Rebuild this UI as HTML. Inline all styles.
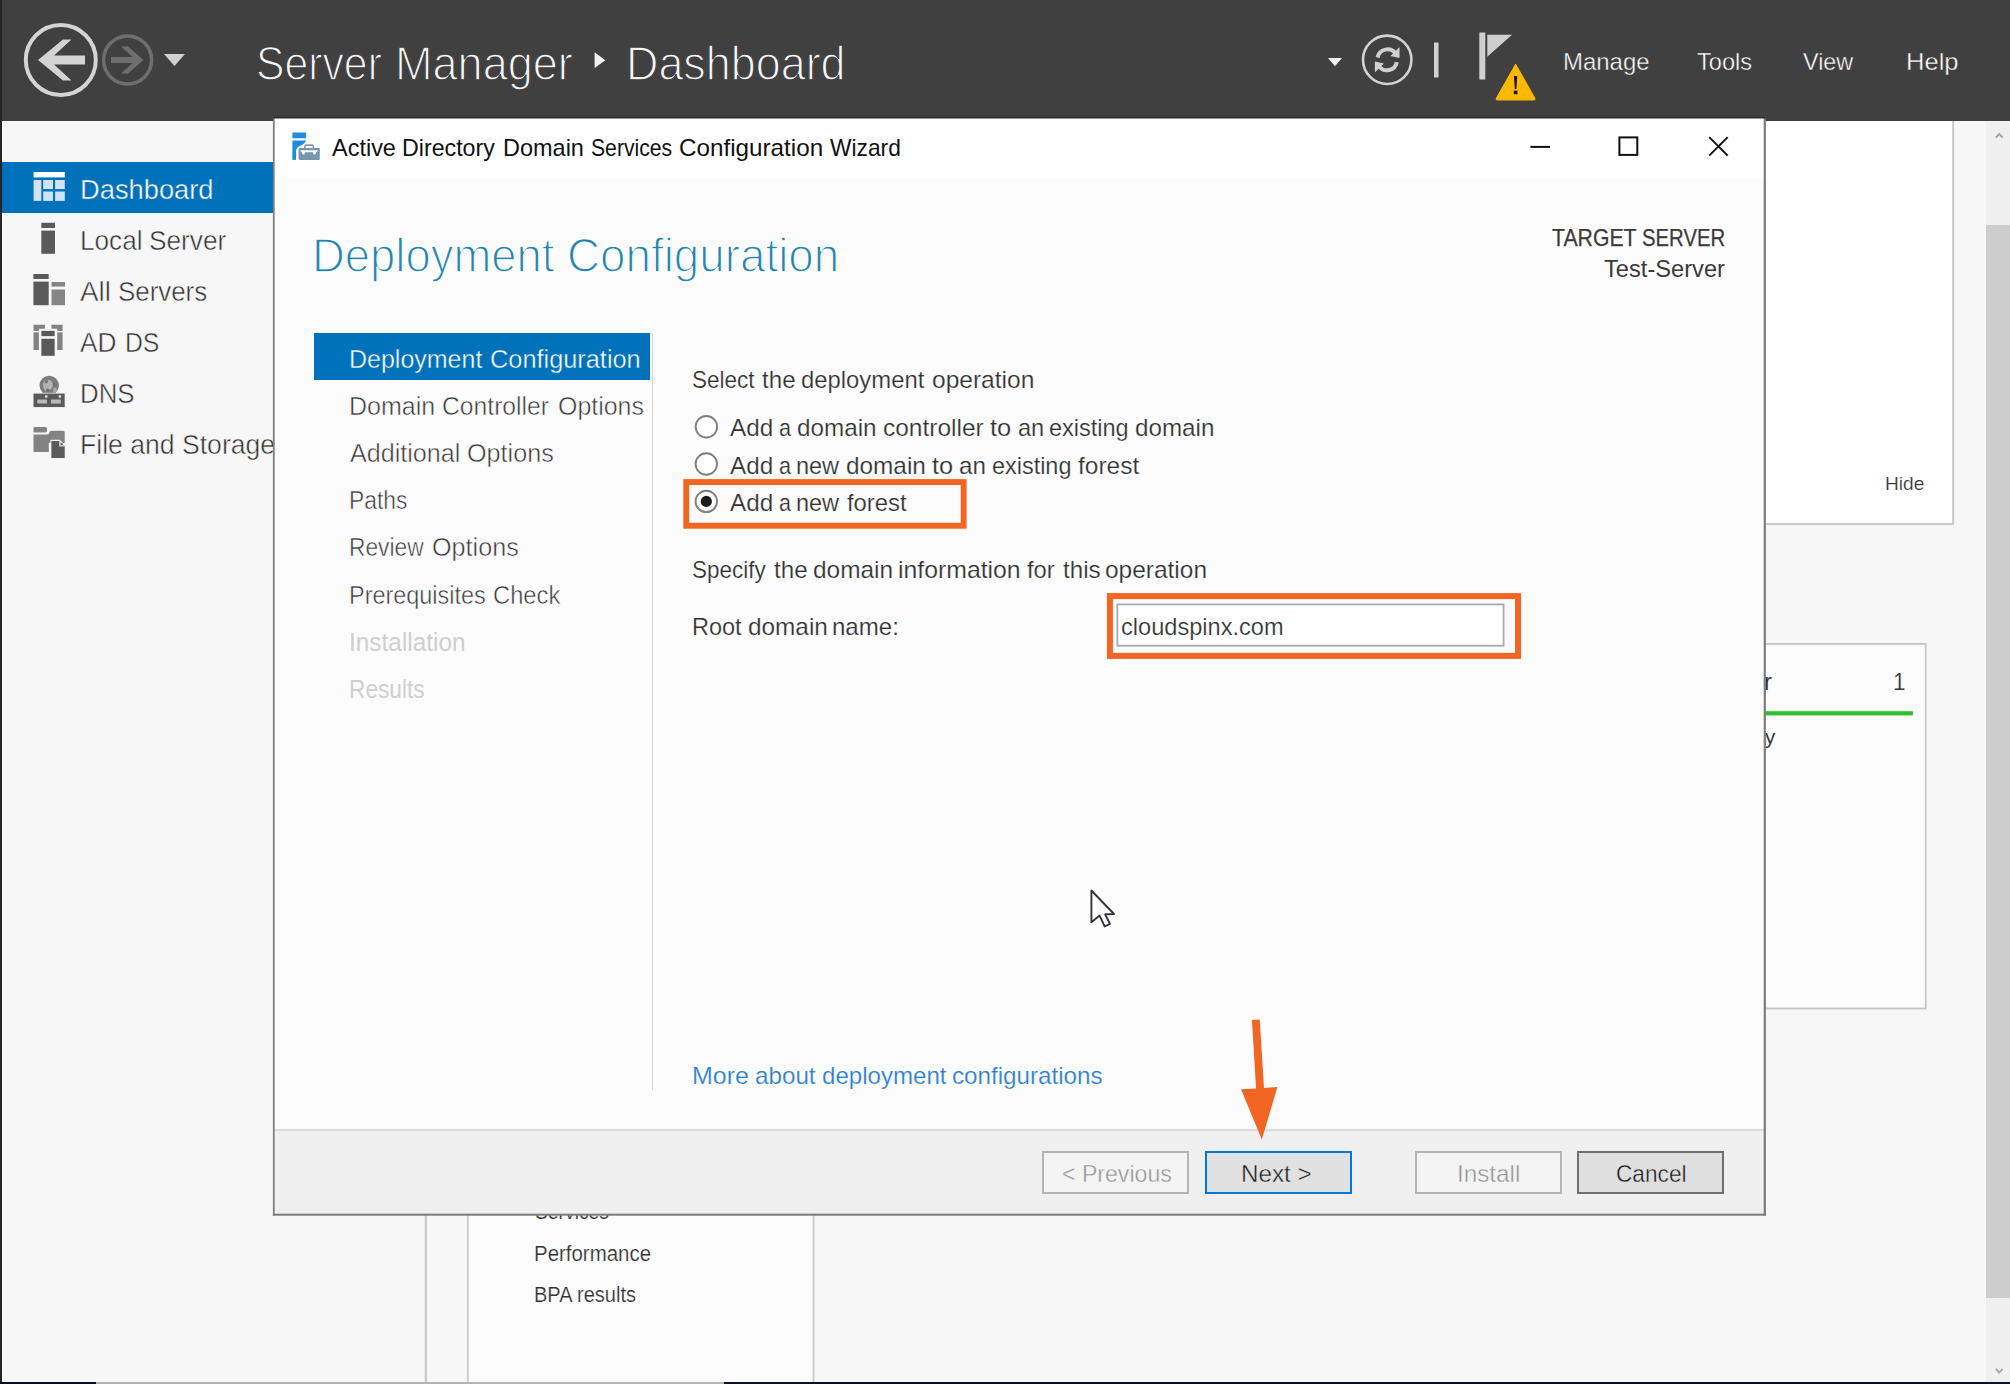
<!DOCTYPE html>
<html lang="en"><head><meta charset="utf-8"><title>Server Manager - Active Directory Domain Services Configuration Wizard</title>
<style>
*{box-sizing:border-box;margin:0;padding:0}
html,body{width:2010px;height:1384px;overflow:hidden;background:#f7f7f7;font-family:'Liberation Sans',sans-serif}
.abs,.t,svg{position:absolute}
.line{display:contents}
ul,ol{list-style:none}
h1,h2,h3{font-size:inherit;font-weight:inherit}
button{font:inherit;color:inherit;appearance:none;-webkit-appearance:none;cursor:default;overflow:visible;text-align:left}
fieldset{border:0;min-width:0}
.t{white-space:nowrap;transform-origin:0 0;display:block}
#app{position:absolute;left:0;top:0;width:2010px;height:1384px;overflow:hidden;background:#f7f7f7}
#edgeL{left:0;top:0;width:2px;height:1384px;background:#252525}
#header{left:2px;top:0;width:2008px;height:121px;background:#404040}
#sidebar{left:2px;top:120px;width:272px;height:1262px;overflow:hidden}
#sel{left:0;top:42px;width:272px;height:51px;background:#0072bb}
#wizard{left:274px;top:118px;width:1490.5px;height:1096.5px;background:#fcfcfc}
#wtitle{left:274.8px;top:118.6px;width:1489.1px;height:59px;background:#fff}
#wfoot{left:274.8px;top:1129.3px;width:1489.1px;height:84.5px;background:#f0f0f0;border-top:2px solid #dcdcdc}
.btn{top:1151.1px;height:43px;width:147.3px;border:2px solid #b2b6b9;background:#f4f4f4}
</style></head><body>
<div id="app">

<!-- ===== background dashboard content ===== -->
<main id="dashboard" aria-label="Dashboard">
<div class="abs" style="left:468px;top:1200px;width:345px;height:190px;background:#fcfcfc"></div>
<svg style="left:420px;top:1200px" width="400" height="184" viewBox="420 1200 400 184">
 <rect x="424.6" y="1200" width="2.5" height="184" fill="#cdcdcd"/>
 <rect x="467" y="1200" width="1.8" height="184" fill="#cbcbcb"/>
 <rect x="812.6" y="1200" width="1.8" height="184" fill="#cbcbcb"/>
</svg>
<span class="t" style="left:534.9px;top:1202px;font-size:21.5px;line-height:21.5px;color:#333333;font-weight:400;transform:scaleX(0.8975);-webkit-text-stroke:0.2px #fcfcfc;">Services</span>
<span class="t" style="left:533.9px;top:1244px;font-size:21.5px;line-height:21.5px;color:#333333;font-weight:400;transform:scaleX(0.9508);-webkit-text-stroke:0.2px #fcfcfc;">Performance</span>
<span class="t" style="left:533.94px;top:1285px;font-size:21.5px;line-height:21.5px;color:#333333;font-weight:400;transform:scaleX(0.9308);-webkit-text-stroke:0.2px #fcfcfc;">BPA results</span>
<svg style="left:1756px;top:118px" width="204" height="412" viewBox="1756 118 204 412"><rect x="1758" y="119" width="195.1" height="405" fill="#fff" stroke="#cbcbcb" stroke-width="2"/></svg>
<span class="t" style="left:1884.59px;top:474px;font-size:19px;line-height:19px;color:#333333;font-weight:400;transform:scaleX(1.0056);-webkit-text-stroke:0.2px #ffffff;">Hide</span>
<svg style="left:1756px;top:640px" width="176" height="374" viewBox="1756 640 176 374"><rect x="1758" y="643.9" width="167.7" height="364.6" fill="#fcfcfc" stroke="#c5c5c5" stroke-width="1.8"/></svg>
<span class="t" style="left:1764px;top:671px;font-size:23.5px;line-height:23.5px;color:#333">r</span>
<span class="t" style="left:1893.08px;top:671px;font-size:23.5px;line-height:23.5px;color:#333333;font-weight:400;transform:scaleX(0.96);-webkit-text-stroke:0.2px #fcfcfc;">1</span>
<svg style="left:1756px;top:706px" width="162" height="14" viewBox="1756 706 162 14"><rect x="1758" y="711.2" width="154.9" height="4.2" fill="#2fc032"/></svg>
<span class="t" style="left:1765px;top:727px;font-size:20.5px;line-height:20.5px;color:#333">y</span>
<!-- scrollbar -->
<div class="abs" style="left:1985.5px;top:120px;width:24.5px;height:1262px;background:#f0f0f0"></div>
<div class="abs" style="left:1985.5px;top:225px;width:24.5px;height:1073px;background:#cdcdcd"></div>
<svg style="left:1990px;top:128px" width="18" height="14" viewBox="1990 128 18 14"><path d="M1995.8 137.6 L1999.3 134 L2002.8 137.6" fill="none" stroke="#a6a6a6" stroke-width="2"/></svg>
<svg style="left:1990px;top:1362px" width="18" height="16" viewBox="1990 1362 18 16"><path d="M1995.8 1368.8 L1999.2 1372.6 L2002.6 1368.8" fill="none" stroke="#aaaaaa" stroke-width="2"/></svg>
</main>

<!-- ===== header ===== -->
<header id="topbar">
<div id="header" class="abs"></div>
<svg style="left:0;top:0" width="260" height="120" viewBox="0 0 260 120">
 <circle cx="60.8" cy="60" r="35" fill="none" stroke="#d4d4d4" stroke-width="4"/>
 <path d="M38 60 L63 39.5 L71.5 39.5 L54 55.5 L85 55.5 L85 64.5 L54 64.5 L71.5 80.5 L63 80.5 Z" fill="#d4d4d4"/>
 <circle cx="127.6" cy="60" r="24" fill="none" stroke="#6e6e6e" stroke-width="3.5"/>
 <path d="M143.5 60 L128 46.5 L121 46.5 L132.5 57 L111 57 L111 63 L132.5 63 L121 73.5 L128 73.5 Z" fill="#6e6e6e"/>
 <path d="M164 54 L185 54 L174.5 66 Z" fill="#d0d0d0"/>
</svg>
<h1 class="line"><span class="line"><span class="t" style="left:255.88px;top:39px;font-size:49px;line-height:49px;color:#ececec;font-weight:400;transform:scaleX(0.8721);-webkit-text-stroke:1.4px #404040;color:#f6f6f6;">Server </span><span class="t" style="left:395.12px;top:39px;font-size:49px;line-height:49px;color:#ececec;font-weight:400;transform:scaleX(0.9197);-webkit-text-stroke:1.4px #404040;color:#f6f6f6;">Manager</span></span>
<svg style="left:594px;top:50px" width="16" height="22" viewBox="0 0 16 22"><path d="M0.6 2.2 L11.4 10.3 L0.6 18 Z" fill="#f2f2f2"/></svg>
<span class="t" style="left:625.64px;top:39px;font-size:49px;line-height:49px;color:#ececec;font-weight:400;transform:scaleX(0.9159);-webkit-text-stroke:1.4px #404040;color:#f6f6f6;">Dashboard</span></h1>
<svg style="left:1320px;top:20px" width="230" height="95" viewBox="1320 20 230 95">
 <path d="M1328 58 L1342 58 L1335 66.3 Z" fill="#f2f2f2"/>
 <circle cx="1387.2" cy="59.8" r="24.2" fill="none" stroke="#d2d2d2" stroke-width="2.6"/>
 <path d="M1377.6 57.5 A10 10 0 0 1 1395.5 53.5" fill="none" stroke="#d0d0d0" stroke-width="4"/>
 <path d="M1390.5 56 L1399.5 47 L1399.5 58 Z" fill="#d0d0d0"/>
 <path d="M1396.8 62.1 A10 10 0 0 1 1378.9 66.1" fill="none" stroke="#d0d0d0" stroke-width="4"/>
 <path d="M1383.9 63.6 L1374.9 72.6 L1374.9 61.6 Z" fill="#d0d0d0"/>
 <rect x="1434" y="42.5" width="4.5" height="35" fill="#d0d0d0"/>
 <rect x="1479.3" y="32.5" width="6" height="47" fill="#cfcfcf"/>
 <path d="M1487.3 34.8 L1512 34.8 L1487.3 56.7 Z" fill="#cfcfcf"/>
 <path d="M1515.6 64.5 L1534.6 98 Q1535.4 99.8 1533.4 99.8 L1497.8 99.8 Q1495.8 99.8 1496.6 98 Z" fill="#ffb900" stroke="#ffb900" stroke-width="1.2" stroke-linejoin="round"/>
 <path d="M1514 76 L1517.2 76 L1516.4 89 L1514.8 89 Z" fill="#111"/>
 <rect x="1513.8" y="90.6" width="3.6" height="3.6" fill="#111"/>
</svg>
<ul class="menu"><li><span class="t" style="left:1562.5px;top:50px;font-size:24px;line-height:24px;color:#ffffff;font-weight:400;transform:scaleX(0.9976);-webkit-text-stroke:0.4px #404040;">Manage</span></li><li><span class="t" style="left:1697.02px;top:50px;font-size:24px;line-height:24px;color:#ffffff;font-weight:400;transform:scaleX(0.9815);-webkit-text-stroke:0.4px #404040;">Tools</span></li><li><span class="t" style="left:1803.0px;top:50px;font-size:24px;line-height:24px;color:#ffffff;font-weight:400;transform:scaleX(0.9712);-webkit-text-stroke:0.4px #404040;">View</span></li><li><span class="t" style="left:1905.87px;top:50px;font-size:24px;line-height:24px;color:#ffffff;font-weight:400;transform:scaleX(1.0652);-webkit-text-stroke:0.4px #404040;">Help</span></li></ul>
</header>

<!-- ===== sidebar ===== -->
<nav id="sidenav" aria-label="Server Manager navigation">
<div id="sidebar" class="abs"><div id="sel" class="abs"></div></div>
<svg style="left:0;top:160px" width="80" height="310" viewBox="0 160 80 310">
 <!-- dashboard -->
 <rect x="33.6" y="172" width="31.2" height="5.4" fill="#fff"/>
 <g fill="#cfe3f3"><rect x="33.6" y="180" width="7.7" height="20.9"/><rect x="43.2" y="180" width="9.8" height="9.1"/><rect x="55.1" y="180" width="9.7" height="9.1"/>
 <rect x="43.2" y="191.5" width="9.8" height="9.4"/><rect x="55.1" y="191.5" width="9.7" height="9.4"/></g>
 <!-- local server -->
 <rect x="41.3" y="222.8" width="13.7" height="5.2" fill="#5a5a5a"/><rect x="41.3" y="230.6" width="13.7" height="23.2" fill="#5a5a5a"/>
 <!-- all servers -->
 <rect x="33.4" y="274" width="15.3" height="5" fill="#5a5a5a"/><rect x="33.4" y="281.6" width="15.3" height="23.6" fill="#5a5a5a"/>
 <rect x="51.5" y="282" width="13.5" height="4.6" fill="#858585"/><rect x="51.5" y="289.5" width="13.5" height="15.7" fill="#858585"/>
 <!-- AD DS -->
 <g fill="#838383"><path d="M33.5 324.8 H44.9 V328.7 H38.9 V330.9 H33.5 Z"/><path d="M51.4 324.8 H62.6 V330.9 H57.2 V328.7 H51.4 Z"/><rect x="33.5" y="332.3" width="5.4" height="17.7"/><rect x="57.2" y="332.3" width="5.4" height="17.7"/></g>
 <g fill="#5a5a5a" stroke="#ececec" stroke-width="1.3" paint-order="stroke"><rect x="41.4" y="330.9" width="13.2" height="5.2"/><rect x="41.4" y="338.8" width="13.2" height="17"/></g>
 <!-- DNS -->
 <circle cx="49.2" cy="385.4" r="9.7" fill="#7c7c7c"/>
 <path d="M43 383.5 Q45.5 379 50 380 Q54 382.5 52.5 386.5 Q51 390.5 47.5 389.5 Q45.5 392 44 389 Q42.3 386 43 383.5 Z" fill="#b3b3b3"/>
 <path d="M53.5 388 Q56.5 386.5 57 390 Q55.5 393 53 392.5 Z" fill="#a8a8a8"/>
 <path d="M45 381.5 Q46.5 379.5 48.5 380.8 Q47.5 383.5 45.5 383.5 Z M53 383 Q55 382 55.5 384.5 Q54.5 386.5 53 385.5 Z M46.5 388.5 Q48.5 388 49.5 390 Q48 392 46.5 391 Z" fill="#6e6e6e"/>
 <rect x="33.5" y="393.55" width="31.2" height="13.55" fill="#5a5a5a" stroke="#fafafa" stroke-width="1.4" paint-order="stroke"/>
 <rect x="37.3" y="399.5" width="9.7" height="4" fill="#b8b8b8"/><rect x="51" y="399.5" width="9.8" height="4" fill="#b8b8b8"/>
 <rect x="45" y="395.3" width="2.4" height="2.3" fill="#e6e6e6"/><rect x="58.7" y="395.3" width="2.4" height="2.3" fill="#e6e6e6"/>
 <!-- File and storage -->
 <path d="M34.6 426.9 H45.4 Q47 426.9 47 428.6 V430.8 Q47 432.45 45.4 432.45 H33.5 V428 Q33.5 426.9 34.6 426.9 Z" fill="#838383"/>
 <path d="M33.5 434.6 H46.5 Q49 434.6 49.4 432.4 Q49.8 430.8 51.6 430.8 H63 Q64.7 430.8 64.7 432.5 V443 H48.8 V452.1 H33.5 Z" fill="#838383"/>
 <path d="M51.4 440.9 H59.2 L64.7 446.4 V458.1 H51.4 Z" fill="#5a5a5a" stroke="#f2f2f2" stroke-width="2.2" paint-order="stroke" stroke-linejoin="round"/>
 <path d="M59.2 441 V446.4 H64.6 Z" fill="#dedede"/>
 <rect x="60.6" y="443.2" width="2" height="2" fill="#5a5a5a"/>
</svg>
<ul><li class="selected"><span class="t" style="left:80.02px;top:176px;font-size:27.5px;line-height:27.5px;color:#ffffff;font-weight:400;transform:scaleX(0.9924);-webkit-text-stroke:0.4px #0072bb;">Dashboard</span></li><li><span class="line"><span class="t" style="left:80.1px;top:227px;font-size:27.5px;line-height:27.5px;color:#333333;font-weight:400;transform:scaleX(0.9516);-webkit-text-stroke:0.5px #f7f7f7;">Local </span><span class="t" style="left:148.79px;top:227px;font-size:27.5px;line-height:27.5px;color:#333333;font-weight:400;transform:scaleX(0.9544);-webkit-text-stroke:0.5px #f7f7f7;">Server</span></span></li><li><span class="line"><span class="t" style="left:80.4px;top:278px;font-size:27.5px;line-height:27.5px;color:#333333;font-weight:400;transform:scaleX(1.0103);-webkit-text-stroke:0.5px #f7f7f7;">All </span><span class="t" style="left:117.52px;top:278px;font-size:27.5px;line-height:27.5px;color:#333333;font-weight:400;transform:scaleX(0.9413);-webkit-text-stroke:0.5px #f7f7f7;">Servers</span></span></li><li><span class="line"><span class="t" style="left:80.4px;top:329px;font-size:27.5px;line-height:27.5px;color:#333333;font-weight:400;transform:scaleX(0.9541);-webkit-text-stroke:0.5px #f7f7f7;">AD </span><span class="t" style="left:124.85px;top:329px;font-size:27.5px;line-height:27.5px;color:#333333;font-weight:400;transform:scaleX(0.9);-webkit-text-stroke:0.5px #f7f7f7;">DS</span></span></li><li><span class="t" style="left:80.12px;top:380px;font-size:27.5px;line-height:27.5px;color:#333333;font-weight:400;transform:scaleX(0.9382);-webkit-text-stroke:0.5px #f7f7f7;">DNS</span></li>
<li><div class="abs" style="left:0;top:420px;width:274px;height:50px;overflow:hidden"><span class="t" style="left:80.07px;top:431px;font-size:27.5px;line-height:27.5px;color:#333333;font-weight:400;transform:scaleX(0.967);-webkit-text-stroke:0.5px #f7f7f7;margin-top:-420px;">File and Storage Services</span></div></li></ul>
</nav>

<!-- ===== wizard window ===== -->
<section id="wiz" role="dialog" aria-label="Active Directory Domain Services Configuration Wizard">
<div id="wizard" class="abs"></div>
<div id="wtitle" class="abs"></div>
<div id="wfoot" class="abs"></div>
<svg style="left:270px;top:114px" width="1500" height="1106" viewBox="270 114 1500 1106">
 <rect x="272.9" y="116.8" width="1.8" height="1098.9" fill="#808080"/>
 <rect x="1763.7" y="116.8" width="2.2" height="1098.9" fill="#7c7c7c"/>
 <rect x="272.9" y="1213.7" width="1493" height="2" fill="#7c7c7c"/>
 <rect x="272.9" y="116.7" width="1493" height="1.8" fill="#2e2e2e"/>
</svg>
<svg style="left:288px;top:128px" width="36" height="36" viewBox="288 128 36 36">
 <rect x="292.4" y="132.5" width="13.7" height="5.8" rx="0.8" fill="#1f8ddb"/>
 <path d="M293.2 140.6 H305.4 Q306.4 140.6 305.8 141.6 Q303.5 145 300 146 Q296.2 147.3 296.1 151 V159.3 Q296.1 160.1 295.3 160.1 H293.2 Q292.4 160.1 292.4 159.3 V141.4 Q292.4 140.6 293.2 140.6 Z" fill="#1f8ddb"/>
 <rect x="298.6" y="148.1" width="21.2" height="12" rx="0.8" fill="#7896ab"/>
 <path d="M304.9 148.3 V146.6 Q304.9 145.2 306.3 145.2 H312 Q313.4 145.2 313.4 146.6 V148.3" fill="none" stroke="#7f9cb0" stroke-width="1.7"/>
 <path d="M300.2 150.2 H318 L316.6 152.2 H316.2 L315.3 154.4 H313.6 L313 152.2 H305 L304.4 154.4 H302.7 L301.8 152.2 H301.4 Z" fill="#fdfdfd"/>
</svg>
<h2 class="line"><span class="line"><span class="t" style="left:332.2px;top:136px;font-size:24px;line-height:24px;color:#111111;font-weight:400;transform:scaleX(0.9781);">Active </span><span class="t" style="left:402.47px;top:136px;font-size:24px;line-height:24px;color:#111111;font-weight:400;transform:scaleX(0.967);">Directory </span><span class="t" style="left:502.54px;top:136px;font-size:24px;line-height:24px;color:#111111;font-weight:400;transform:scaleX(0.9785);">Domain </span><span class="t" style="left:591.02px;top:136px;font-size:24px;line-height:24px;color:#111111;font-weight:400;transform:scaleX(0.8822);">Services </span><span class="t" style="left:679.49px;top:136px;font-size:24px;line-height:24px;color:#111111;font-weight:400;transform:scaleX(1.01);">Configuration </span><span class="t" style="left:830.0px;top:136px;font-size:24px;line-height:24px;color:#111111;font-weight:400;transform:scaleX(0.9479);">Wizard</span></span></h2>
<svg style="left:1520px;top:130px" width="220" height="34" viewBox="1520 130 220 34">
 <rect x="1530.4" y="145.9" width="19.6" height="2" fill="#111"/>
 <rect x="1619.4" y="137.4" width="17.9" height="17.5" fill="none" stroke="#111" stroke-width="2"/>
 <path d="M1709.2 137.1 L1727.7 155.6 M1727.7 137.1 L1709.2 155.6" stroke="#111" stroke-width="2" fill="none"/>
</svg>
<h1 class="line"><span class="line"><span class="t" style="left:312.49px;top:231px;font-size:49px;line-height:49px;color:#3d93bd;font-weight:400;transform:scaleX(0.9272);-webkit-text-stroke:1.5px #fcfcfc;color:#2585b0;">Deployment </span><span class="t" style="left:566.5px;top:231px;font-size:49px;line-height:49px;color:#3d93bd;font-weight:400;transform:scaleX(0.934);-webkit-text-stroke:1.5px #fcfcfc;color:#2585b0;">Configuration</span></span></h1>
<div class="line"><span class="line"><span class="t" style="left:1552.11px;top:226px;font-size:24px;line-height:24px;color:#3a3a3a;font-weight:400;transform:scaleX(0.8851);-webkit-text-stroke:0.25px #3a3a3a;">TARGET </span><span class="t" style="left:1642.45px;top:226px;font-size:24px;line-height:24px;color:#3a3a3a;font-weight:400;transform:scaleX(0.8469);-webkit-text-stroke:0.25px #3a3a3a;">SERVER</span></span><span class="t" style="left:1604.01px;top:257px;font-size:24px;line-height:24px;color:#3a3a3a;font-weight:400;transform:scaleX(0.986);">Test-Server</span></div>
<div class="abs" style="left:314px;top:333px;width:335.5px;height:47px;background:#0072bb"></div>
<div class="abs" style="left:651.5px;top:333px;width:1.6px;height:757px;background:#d3d3d3"></div>
<ol class="steps"><li class="current"><span class="line"><span class="t" style="left:348.88px;top:346px;font-size:26px;line-height:26px;color:#ffffff;font-weight:400;transform:scaleX(0.9613);-webkit-text-stroke:0.4px #0072bb;">Deployment </span><span class="t" style="left:490.23px;top:346px;font-size:26px;line-height:26px;color:#ffffff;font-weight:400;transform:scaleX(0.9743);-webkit-text-stroke:0.4px #0072bb;">Configuration</span></span></li><li><span class="line"><span class="t" style="left:348.87px;top:393px;font-size:26px;line-height:26px;color:#3a3a3a;font-weight:400;transform:scaleX(0.9628);-webkit-text-stroke:0.5px #fcfcfc;">Domain </span><span class="t" style="left:442.25px;top:393px;font-size:26px;line-height:26px;color:#3a3a3a;font-weight:400;transform:scaleX(0.9495);-webkit-text-stroke:0.5px #fcfcfc;">Controller </span><span class="t" style="left:557.94px;top:393px;font-size:26px;line-height:26px;color:#3a3a3a;font-weight:400;transform:scaleX(0.9591);-webkit-text-stroke:0.5px #fcfcfc;">Options</span></span></li><li><span class="line"><span class="t" style="left:349.8px;top:440px;font-size:26px;line-height:26px;color:#3a3a3a;font-weight:400;transform:scaleX(0.9664);-webkit-text-stroke:0.5px #fcfcfc;">Additional </span><span class="t" style="left:467.13px;top:440px;font-size:26px;line-height:26px;color:#3a3a3a;font-weight:400;transform:scaleX(0.9682);-webkit-text-stroke:0.5px #fcfcfc;">Options</span></span></li><li><span class="t" style="left:348.74px;top:487px;font-size:26px;line-height:26px;color:#3a3a3a;font-weight:400;transform:scaleX(0.8781);-webkit-text-stroke:0.5px #fcfcfc;">Paths</span></li><li><span class="line"><span class="t" style="left:348.95px;top:534px;font-size:26px;line-height:26px;color:#3a3a3a;font-weight:400;transform:scaleX(0.8747);-webkit-text-stroke:0.5px #fcfcfc;">Review </span><span class="t" style="left:432.03px;top:534px;font-size:26px;line-height:26px;color:#3a3a3a;font-weight:400;transform:scaleX(0.9682);-webkit-text-stroke:0.5px #fcfcfc;">Options</span></span></li><li><span class="line"><span class="t" style="left:348.9px;top:582px;font-size:26px;line-height:26px;color:#3a3a3a;font-weight:400;transform:scaleX(0.9013);-webkit-text-stroke:0.5px #fcfcfc;">Prerequisites </span><span class="t" style="left:493.19px;top:582px;font-size:26px;line-height:26px;color:#3a3a3a;font-weight:400;transform:scaleX(0.9125);-webkit-text-stroke:0.5px #fcfcfc;">Check</span></span></li><li class="disabled"><span class="t" style="left:348.82px;top:629px;font-size:26px;line-height:26px;color:#cfcfcf;font-weight:400;transform:scaleX(0.9388);">Installation</span></li><li class="disabled"><span class="t" style="left:348.95px;top:676px;font-size:26px;line-height:26px;color:#cfcfcf;font-weight:400;transform:scaleX(0.8726);">Results</span></li></ol>
<form onsubmit="return false">
<fieldset><legend class="line"><span class="line"><span class="t" style="left:691.56px;top:368px;font-size:24px;line-height:24px;color:#323232;font-weight:400;transform:scaleX(0.9385);-webkit-text-stroke:0.2px #fcfcfc;">Select </span><span class="t" style="left:761.6px;top:368px;font-size:24px;line-height:24px;color:#323232;font-weight:400;transform:scaleX(1.0062);-webkit-text-stroke:0.2px #fcfcfc;">the </span><span class="t" style="left:800.91px;top:368px;font-size:24px;line-height:24px;color:#323232;font-weight:400;transform:scaleX(0.9935);-webkit-text-stroke:0.2px #fcfcfc;">deployment </span><span class="t" style="left:931.68px;top:368px;font-size:24px;line-height:24px;color:#323232;font-weight:400;transform:scaleX(1.0224);-webkit-text-stroke:0.2px #fcfcfc;">operation</span></span></legend>
<svg style="left:690px;top:410px" width="34" height="110" viewBox="690 410 34 110">
 <circle cx="706.4" cy="426.8" r="10.75" fill="#fff" stroke="#7f7f7f" stroke-width="1.9"/>
 <circle cx="706.3" cy="464" r="10.7" fill="#fff" stroke="#7f7f7f" stroke-width="1.9"/>
 <circle cx="706.3" cy="501.4" r="10.7" fill="#fff" stroke="#7f7f7f" stroke-width="1.9"/>
 <circle cx="706.3" cy="501.4" r="5.6" fill="#1c1c1c"/>
</svg>
<label class="line"><span class="line"><span class="t" style="left:730.1px;top:416px;font-size:24px;line-height:24px;color:#323232;font-weight:400;transform:scaleX(1.0098);-webkit-text-stroke:0.2px #fcfcfc;">Add </span><span class="t" style="left:779.05px;top:416px;font-size:24px;line-height:24px;color:#323232;font-weight:400;transform:scaleX(0.9);-webkit-text-stroke:0.2px #fcfcfc;">a </span><span class="t" style="left:797.39px;top:416px;font-size:24px;line-height:24px;color:#323232;font-weight:400;transform:scaleX(1.0105);-webkit-text-stroke:0.2px #fcfcfc;">domain </span><span class="t" style="left:882.78px;top:416px;font-size:24px;line-height:24px;color:#323232;font-weight:400;transform:scaleX(1.0196);-webkit-text-stroke:0.2px #fcfcfc;">controller </span><span class="t" style="left:989.9px;top:416px;font-size:24px;line-height:24px;color:#323232;font-weight:400;transform:scaleX(1.0632);-webkit-text-stroke:0.2px #fcfcfc;">to </span><span class="t" style="left:1017.72px;top:416px;font-size:24px;line-height:24px;color:#323232;font-weight:400;transform:scaleX(0.9833);-webkit-text-stroke:0.2px #fcfcfc;">an </span><span class="t" style="left:1049.42px;top:416px;font-size:24px;line-height:24px;color:#323232;font-weight:400;transform:scaleX(0.9785);-webkit-text-stroke:0.2px #fcfcfc;">existing </span><span class="t" style="left:1135.29px;top:416px;font-size:24px;line-height:24px;color:#323232;font-weight:400;transform:scaleX(1.0079);-webkit-text-stroke:0.2px #fcfcfc;">domain</span></span></label><label class="line"><span class="line"><span class="t" style="left:730.1px;top:454px;font-size:24px;line-height:24px;color:#323232;font-weight:400;transform:scaleX(1.0098);-webkit-text-stroke:0.2px #fcfcfc;">Add </span><span class="t" style="left:779.05px;top:454px;font-size:24px;line-height:24px;color:#323232;font-weight:400;transform:scaleX(0.9);-webkit-text-stroke:0.2px #fcfcfc;">a </span><span class="t" style="left:796.44px;top:454px;font-size:24px;line-height:24px;color:#323232;font-weight:400;transform:scaleX(0.9786);-webkit-text-stroke:0.2px #fcfcfc;">new </span><span class="t" style="left:846.49px;top:454px;font-size:24px;line-height:24px;color:#323232;font-weight:400;transform:scaleX(1.0145);-webkit-text-stroke:0.2px #fcfcfc;">domain </span><span class="t" style="left:932.2px;top:454px;font-size:24px;line-height:24px;color:#323232;font-weight:400;transform:scaleX(1.0579);-webkit-text-stroke:0.2px #fcfcfc;">to </span><span class="t" style="left:959.39px;top:454px;font-size:24px;line-height:24px;color:#323232;font-weight:400;transform:scaleX(1.0083);-webkit-text-stroke:0.2px #fcfcfc;">an </span><span class="t" style="left:991.62px;top:454px;font-size:24px;line-height:24px;color:#323232;font-weight:400;transform:scaleX(0.9759);-webkit-text-stroke:0.2px #fcfcfc;">existing </span><span class="t" style="left:1077.8px;top:454px;font-size:24px;line-height:24px;color:#323232;font-weight:400;transform:scaleX(1.02);-webkit-text-stroke:0.2px #fcfcfc;">forest</span></span></label><label class="line"><span class="line"><span class="t" style="left:730.1px;top:491px;font-size:24px;line-height:24px;color:#323232;font-weight:400;transform:scaleX(1.0098);-webkit-text-stroke:0.2px #fcfcfc;">Add </span><span class="t" style="left:779.05px;top:491px;font-size:24px;line-height:24px;color:#323232;font-weight:400;transform:scaleX(0.9);-webkit-text-stroke:0.2px #fcfcfc;">a </span><span class="t" style="left:796.44px;top:491px;font-size:24px;line-height:24px;color:#323232;font-weight:400;transform:scaleX(0.9786);-webkit-text-stroke:0.2px #fcfcfc;">new </span><span class="t" style="left:846.5px;top:491px;font-size:24px;line-height:24px;color:#323232;font-weight:400;transform:scaleX(0.9917);-webkit-text-stroke:0.2px #fcfcfc;">forest</span></span></label></fieldset>
<svg style="left:680px;top:476px" width="290" height="56" viewBox="680 476 290 56"><rect x="686.25" y="482.05" width="277.4" height="43.7" fill="none" stroke="#f26522" stroke-width="5.9"/></svg>
<p class="line"><span class="line"><span class="t" style="left:691.56px;top:558px;font-size:24px;line-height:24px;color:#323232;font-weight:400;transform:scaleX(0.9372);-webkit-text-stroke:0.2px #fcfcfc;">Specify </span><span class="t" style="left:773.7px;top:558px;font-size:24px;line-height:24px;color:#323232;font-weight:400;transform:scaleX(1.0062);-webkit-text-stroke:0.2px #fcfcfc;">the </span><span class="t" style="left:812.98px;top:558px;font-size:24px;line-height:24px;color:#323232;font-weight:400;transform:scaleX(1.0171);-webkit-text-stroke:0.2px #fcfcfc;">domain </span><span class="t" style="left:897.83px;top:558px;font-size:24px;line-height:24px;color:#323232;font-weight:400;transform:scaleX(1.033);-webkit-text-stroke:0.2px #fcfcfc;">information </span><span class="t" style="left:1026.7px;top:558px;font-size:24px;line-height:24px;color:#323232;font-weight:400;transform:scaleX(0.9893);-webkit-text-stroke:0.2px #fcfcfc;">for </span><span class="t" style="left:1062.5px;top:558px;font-size:24px;line-height:24px;color:#323232;font-weight:400;transform:scaleX(1.0056);-webkit-text-stroke:0.2px #fcfcfc;">this </span><span class="t" style="left:1105.28px;top:558px;font-size:24px;line-height:24px;color:#323232;font-weight:400;transform:scaleX(1.0194);-webkit-text-stroke:0.2px #fcfcfc;">operation</span></span></p><label class="line"><span class="line"><span class="t" style="left:691.94px;top:615px;font-size:24px;line-height:24px;color:#323232;font-weight:400;transform:scaleX(0.9792);-webkit-text-stroke:0.2px #fcfcfc;">Root </span><span class="t" style="left:747.89px;top:615px;font-size:24px;line-height:24px;color:#323232;font-weight:400;transform:scaleX(1.0145);-webkit-text-stroke:0.2px #fcfcfc;">domain </span><span class="t" style="left:832.1px;top:615px;font-size:24px;line-height:24px;color:#323232;font-weight:400;transform:scaleX(1.0016);-webkit-text-stroke:0.2px #fcfcfc;">name:</span></span></label>
<svg style="left:1112px;top:600px" width="400" height="52" viewBox="1112 600 400 52"><rect x="1117.4" y="604.4" width="386.2" height="41.3" fill="#fff" stroke="#a6aab2" stroke-width="1.8"/></svg>
<div class="line" role="textbox"><span class="t" style="left:1121.32px;top:615px;font-size:24px;line-height:24px;color:#323232;font-weight:400;transform:scaleX(0.9828);-webkit-text-stroke:0.2px #ffffff;">cloudspinx.com</span></div>
<svg style="left:1104px;top:590px" width="420" height="72" viewBox="1104 590 420 72"><rect x="1109.9" y="596.1" width="408.1" height="59.8" fill="none" stroke="#f26522" stroke-width="6"/></svg>
<!-- cursor -->
<svg style="left:1080px;top:880px" width="50" height="60" viewBox="1080 880 50 60">
 <path d="M1091.4 890.5 L1091.4 922.3 L1099.6 915.6 L1104.6 926.4 L1110 924 L1105.2 914.3 L1114 914 Z" fill="#fff" stroke="#33343c" stroke-width="1.9" stroke-linejoin="round"/>
</svg>
<a class="line"><span class="line"><span class="t" style="left:691.92px;top:1064px;font-size:24px;line-height:24px;color:#2a80d0;font-weight:400;transform:scaleX(1.0404);-webkit-text-stroke:0.2px #fcfcfc;">More </span><span class="t" style="left:754.59px;top:1064px;font-size:24px;line-height:24px;color:#2a80d0;font-weight:400;transform:scaleX(1.0085);-webkit-text-stroke:0.2px #fcfcfc;">about </span><span class="t" style="left:822.0px;top:1064px;font-size:24px;line-height:24px;color:#2a80d0;font-weight:400;transform:scaleX(1.0033);-webkit-text-stroke:0.2px #fcfcfc;">deployment </span><span class="t" style="left:952.49px;top:1064px;font-size:24px;line-height:24px;color:#2a80d0;font-weight:400;transform:scaleX(1.0074);-webkit-text-stroke:0.2px #fcfcfc;">configurations</span></span></a>
</form>
<!-- orange arrow -->
<svg style="left:1230px;top:1010px" width="60" height="140" viewBox="1230 1010 60 140">
 <path d="M1251.9 1020.1 L1259.7 1019.6 L1264 1087.9 L1277.4 1087.1 L1261.8 1139.5 L1241 1089.2 L1256.1 1088.4 Z" fill="#f26522"/>
</svg>
<footer>
<button type="button" class="abs btn" style="left:1041.8px;" disabled><span class="t" style="left:18.24px;top:8.9px;font-size:24px;line-height:24px;color:#949494;font-weight:400;transform:scaleX(0.9625);-webkit-text-stroke:0.4px #f4f4f4;">&lt; Previous</span></button>
<button type="button" class="abs btn" style="left:1204.5px;border-color:#0078d7;background:#e1e1e1" ><span class="t" style="left:34.69px;top:8.9px;font-size:24px;line-height:24px;color:#1f1f1f;font-weight:400;transform:scaleX(1.0075);-webkit-text-stroke:0.4px #e1e1e1;">Next &gt;</span></button>
<button type="button" class="abs btn" style="left:1414.6px;" disabled><span class="t" style="left:39.98px;top:8.9px;font-size:24px;line-height:24px;color:#949494;font-weight:400;transform:scaleX(1.0102);-webkit-text-stroke:0.4px #f4f4f4;">Install</span></button>
<button type="button" class="abs btn" style="left:1577.2px;border-color:#6f6f6f;background:#dfdfdf" ><span class="t" style="left:36.36px;top:8.9px;font-size:24px;line-height:24px;color:#1f1f1f;font-weight:400;transform:scaleX(0.9444);-webkit-text-stroke:0.4px #dfdfdf;">Cancel</span></button>
</footer>
</section>

<!-- edges -->
<div id="edgeL" class="abs"></div>
<div class="abs" style="left:0;top:1382px;width:96px;height:2px;background:#0b1120"></div>
<div class="abs" style="left:96px;top:1382px;width:628px;height:2px;background:#b4b4b4"></div>
<div class="abs" style="left:724px;top:1382px;width:1286px;height:2px;background:#0b1120"></div>
</div>
</body></html>
